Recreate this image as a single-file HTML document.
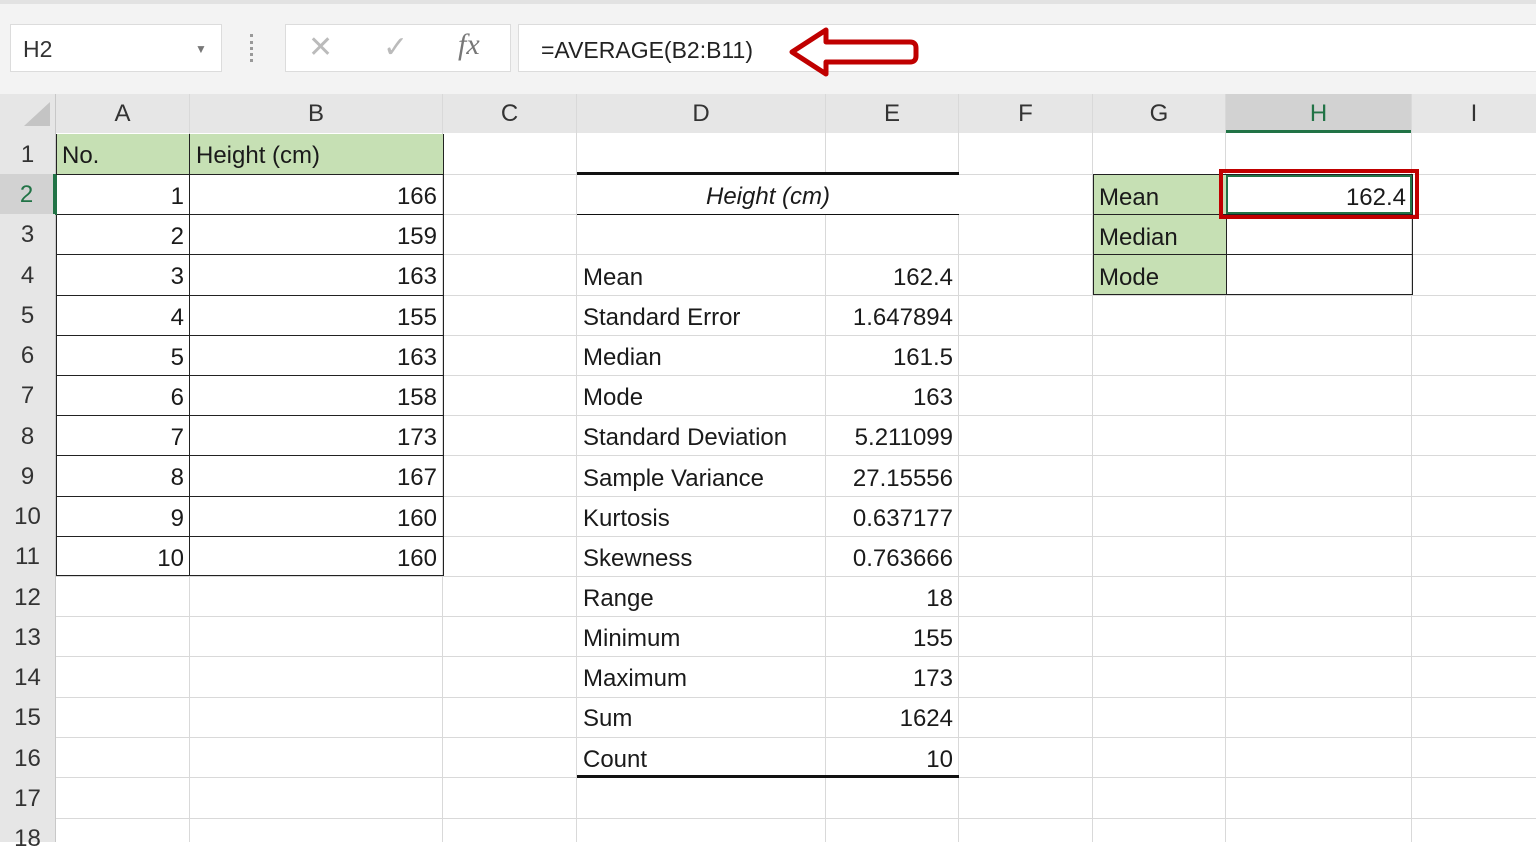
<!DOCTYPE html><html><head><style>
body{margin:0;width:1536px;height:842px;overflow:hidden;background:#fff;font-family:"Liberation Sans",sans-serif;position:relative}
div{position:absolute;box-sizing:border-box}
.t{font-size:24px;line-height:44px;height:40px;color:#1a1a1a;white-space:nowrap;padding:0 6px}
.r{text-align:right}.c{text-align:center}
.vl{top:94px;height:748px;width:1px;background:#d9d9d9}
.hl{left:0;width:1536px;height:1px;background:#d9d9d9}
.rh{left:0;width:56px;font-size:24px;line-height:42px;height:40px;text-align:center;color:#333;background:#e6e6e6;border-right:1px solid #c8c8c8}
.ch{top:94px;height:39px;font-size:24px;line-height:40px;text-align:center;color:#333;background:#e6e6e6;border-right:1px solid #c8c8c8}
</style></head><body>
<div style="left:0;top:0;width:1536px;height:94px;background:#f3f3f3;border-top:4px solid #e2e2e2"></div>
<div style="left:10px;top:24px;width:212px;height:48px;background:#fff;border:1px solid #dcdcdc;font-size:23px;line-height:48px;padding-left:12px;color:#333">H2</div>
<div style="left:195px;top:42px;font-size:12px;color:#777">▼</div>
<div style="left:250px;top:34px;width:4px;height:28px;border-left:3px dotted #999"></div>
<div style="left:285px;top:24px;width:226px;height:48px;background:#fff;border:1px solid #dcdcdc"></div>
<div style="left:308px;top:30px;font-size:30px;color:#bbb">✕</div>
<div style="left:383px;top:30px;font-size:30px;color:#bbb">✓</div>
<div style="left:458px;top:28px;font-size:30px;color:#777;font-family:'Liberation Serif',serif;font-style:italic">fx</div>
<div style="left:518px;top:24px;width:1030px;height:48px;background:#fff;border:1px solid #dcdcdc;font-size:23px;line-height:50px;padding-left:22px;color:#222">=AVERAGE(B2:B11)</div>
<svg style="position:absolute;left:786px;top:26px" width="136" height="56"><path d="M6 26 L40 4 L40 16 L124 16 Q130 16 130 22 L130 30 Q130 36 124 36 L40 36 L40 48 Z" fill="#fff" stroke="#c00000" stroke-width="5" stroke-linejoin="round"/></svg>
<div style="left:0;top:94px;width:1536px;height:39px;background:#e6e6e6;border-bottom:1px solid #c8c8c8"></div>
<div class="ch" style="left:0;width:56px"></div>
<svg style="position:absolute;left:22px;top:100px" width="30" height="28"><path d="M28 2 L28 26 L2 26 Z" fill="#c4c4c4"/></svg>
<div class="ch" style="left:56px;width:134px">A</div>
<div class="ch" style="left:190px;width:253px">B</div>
<div class="ch" style="left:443px;width:134px">C</div>
<div class="ch" style="left:577px;width:249px">D</div>
<div class="ch" style="left:826px;width:133px">E</div>
<div class="ch" style="left:959px;width:134px">F</div>
<div class="ch" style="left:1093px;width:133px">G</div>
<div class="ch" style="left:1226px;width:186px;background:#d2d2d2;color:#217346;border-bottom:3px solid #217346">H</div>
<div class="ch" style="left:1412px;width:124px;border-right:none">I</div>
<div class="vl" style="left:189px"></div><div class="vl" style="left:442px"></div><div class="vl" style="left:576px"></div><div class="vl" style="left:825px"></div><div class="vl" style="left:958px"></div><div class="vl" style="left:1092px"></div><div class="vl" style="left:1225px"></div><div class="vl" style="left:1411px"></div>
<div class="hl" style="top:174px"></div><div class="hl" style="top:214px"></div><div class="hl" style="top:254px"></div><div class="hl" style="top:295px"></div><div class="hl" style="top:335px"></div><div class="hl" style="top:375px"></div><div class="hl" style="top:415px"></div><div class="hl" style="top:455px"></div><div class="hl" style="top:496px"></div><div class="hl" style="top:536px"></div><div class="hl" style="top:576px"></div><div class="hl" style="top:616px"></div><div class="hl" style="top:656px"></div><div class="hl" style="top:697px"></div><div class="hl" style="top:737px"></div><div class="hl" style="top:777px"></div><div class="hl" style="top:818px"></div>
<div style="left:0;top:133px;width:56px;height:709px;background:#e6e6e6;border-right:1px solid #c8c8c8"></div>
<div class="rh" style="top:134px">1</div><div class="rh" style="top:174px;background:#d2d2d2;color:#217346;border-right:3px solid #217346">2</div><div class="rh" style="top:214px">3</div><div class="rh" style="top:255px">4</div><div class="rh" style="top:295px">5</div><div class="rh" style="top:335px">6</div><div class="rh" style="top:375px">7</div><div class="rh" style="top:416px">8</div><div class="rh" style="top:456px">9</div><div class="rh" style="top:496px">10</div><div class="rh" style="top:536px">11</div><div class="rh" style="top:577px">12</div><div class="rh" style="top:617px">13</div><div class="rh" style="top:657px">14</div><div class="rh" style="top:697px">15</div><div class="rh" style="top:738px">16</div><div class="rh" style="top:778px">17</div><div class="rh" style="top:818px;height:24px">18</div>
<div style="left:56px;top:134px;width:388px;height:41px;background:#c6e0b4;border:1px solid #222;border-top:none"></div>
<div style="left:189px;top:134px;width:1px;height:442px;background:#222"></div>
<div style="left:56px;top:174px;width:388px;height:402px;border:1px solid #222;border-top:none"></div>
<div style="left:56px;top:214px;width:388px;height:1px;background:#222"></div><div style="left:56px;top:254px;width:388px;height:1px;background:#222"></div><div style="left:56px;top:295px;width:388px;height:1px;background:#222"></div><div style="left:56px;top:335px;width:388px;height:1px;background:#222"></div><div style="left:56px;top:375px;width:388px;height:1px;background:#222"></div><div style="left:56px;top:415px;width:388px;height:1px;background:#222"></div><div style="left:56px;top:455px;width:388px;height:1px;background:#222"></div><div style="left:56px;top:496px;width:388px;height:1px;background:#222"></div><div style="left:56px;top:536px;width:388px;height:1px;background:#222"></div>
<div style="left:55px;top:175px;width:2px;height:40px;background:#217346"></div>
<div class="t" style="left:56px;top:134px">No.</div><div class="t" style="left:190px;top:134px">Height (cm)</div>
<div class="t r" style="left:56px;width:134px;top:175px">1</div><div class="t r" style="left:190px;width:253px;top:175px">166</div>
<div class="t r" style="left:56px;width:134px;top:215px">2</div><div class="t r" style="left:190px;width:253px;top:215px">159</div>
<div class="t r" style="left:56px;width:134px;top:255px">3</div><div class="t r" style="left:190px;width:253px;top:255px">163</div>
<div class="t r" style="left:56px;width:134px;top:296px">4</div><div class="t r" style="left:190px;width:253px;top:296px">155</div>
<div class="t r" style="left:56px;width:134px;top:336px">5</div><div class="t r" style="left:190px;width:253px;top:336px">163</div>
<div class="t r" style="left:56px;width:134px;top:376px">6</div><div class="t r" style="left:190px;width:253px;top:376px">158</div>
<div class="t r" style="left:56px;width:134px;top:416px">7</div><div class="t r" style="left:190px;width:253px;top:416px">173</div>
<div class="t r" style="left:56px;width:134px;top:456px">8</div><div class="t r" style="left:190px;width:253px;top:456px">167</div>
<div class="t r" style="left:56px;width:134px;top:497px">9</div><div class="t r" style="left:190px;width:253px;top:497px">160</div>
<div class="t r" style="left:56px;width:134px;top:537px">10</div><div class="t r" style="left:190px;width:253px;top:537px">160</div>
<div style="left:577px;top:172px;width:382px;height:3px;background:#111"></div>
<div style="left:577px;top:214px;width:382px;height:1px;background:#111"></div>
<div style="left:577px;top:175px;width:382px;height:39px;background:#fff"></div>
<div style="left:577px;top:775px;width:382px;height:3px;background:#111"></div>
<div class="t c" style="left:577px;width:382px;top:175px;font-style:italic">Height (cm)</div>
<div class="t" style="left:577px;top:256px">Mean</div><div class="t r" style="left:826px;width:133px;top:256px">162.4</div>
<div class="t" style="left:577px;top:296px">Standard Error</div><div class="t r" style="left:826px;width:133px;top:296px">1.647894</div>
<div class="t" style="left:577px;top:336px">Median</div><div class="t r" style="left:826px;width:133px;top:336px">161.5</div>
<div class="t" style="left:577px;top:376px">Mode</div><div class="t r" style="left:826px;width:133px;top:376px">163</div>
<div class="t" style="left:577px;top:416px">Standard Deviation</div><div class="t r" style="left:826px;width:133px;top:416px">5.211099</div>
<div class="t" style="left:577px;top:457px">Sample Variance</div><div class="t r" style="left:826px;width:133px;top:457px">27.15556</div>
<div class="t" style="left:577px;top:497px">Kurtosis</div><div class="t r" style="left:826px;width:133px;top:497px">0.637177</div>
<div class="t" style="left:577px;top:537px">Skewness</div><div class="t r" style="left:826px;width:133px;top:537px">0.763666</div>
<div class="t" style="left:577px;top:577px">Range</div><div class="t r" style="left:826px;width:133px;top:577px">18</div>
<div class="t" style="left:577px;top:617px">Minimum</div><div class="t r" style="left:826px;width:133px;top:617px">155</div>
<div class="t" style="left:577px;top:657px">Maximum</div><div class="t r" style="left:826px;width:133px;top:657px">173</div>
<div class="t" style="left:577px;top:697px">Sum</div><div class="t r" style="left:826px;width:133px;top:697px">1624</div>
<div class="t" style="left:577px;top:738px">Count</div><div class="t r" style="left:826px;width:133px;top:738px">10</div>
<div style="left:1093px;top:174px;width:134px;height:121px;background:#c6e0b4"></div>
<div style="left:1093px;top:174px;width:320px;height:121px;border:1px solid #222"></div>
<div style="left:1226px;top:174px;width:1px;height:121px;background:#222"></div>
<div style="left:1093px;top:214px;width:320px;height:1px;background:#222"></div>
<div style="left:1093px;top:254px;width:320px;height:1px;background:#222"></div>
<div class="t" style="left:1093px;top:176px">Mean</div><div class="t" style="left:1093px;top:216px">Median</div><div class="t" style="left:1093px;top:256px">Mode</div>
<div style="left:1226px;top:175px;width:186px;height:39px;border:2px solid #217346"></div>
<div class="t r" style="left:1226px;width:186px;top:176px">162.4</div>
<div style="left:1219px;top:169px;width:200px;height:50px;border:4px solid #c00000"></div>
</body></html>
